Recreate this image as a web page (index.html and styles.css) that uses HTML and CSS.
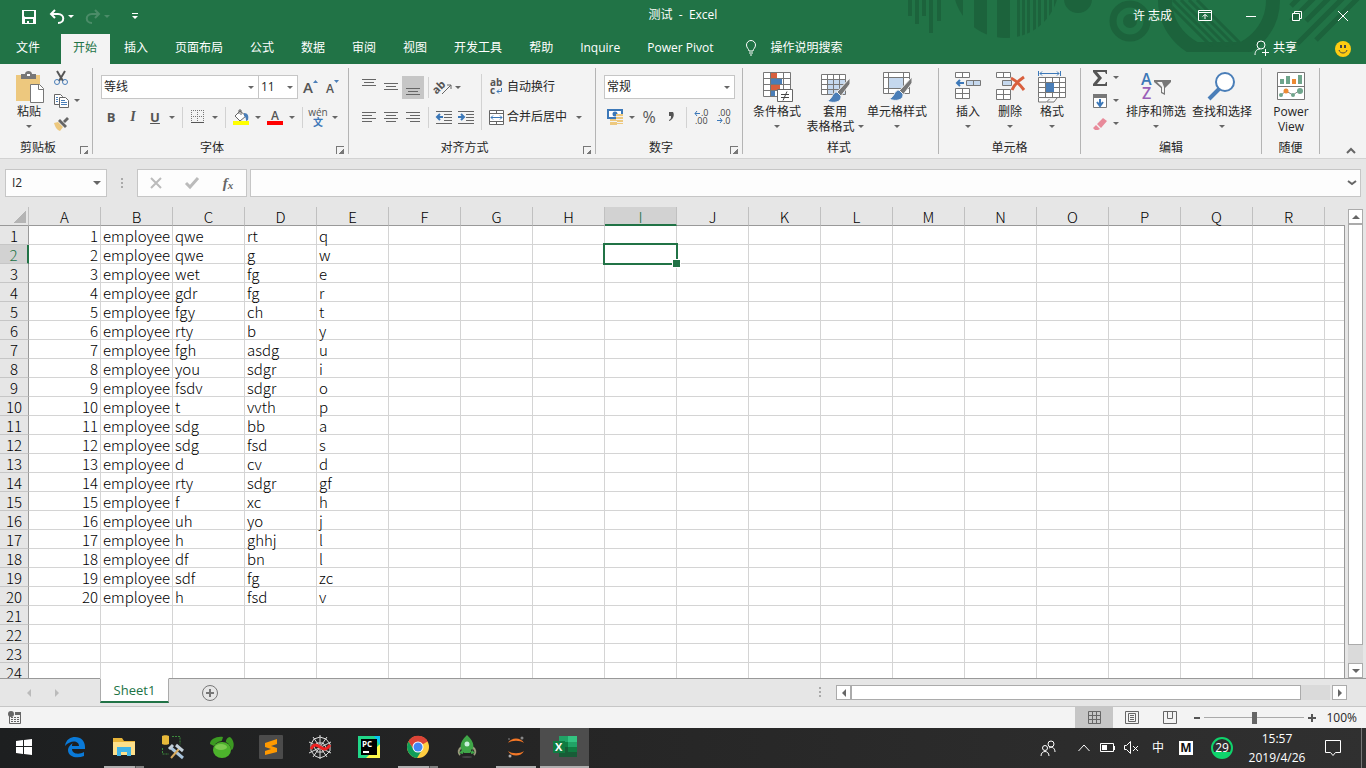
FILE: index.html
```html
<!DOCTYPE html>
<html lang="zh-CN">
<head>
    <meta charset="UTF-8">
    <meta name="viewport" content="width=device-width, initial-scale=1.0">
    <title>测试 - Excel</title>
    <link rel="stylesheet" href="styles.css">
</head>
<body>

<!-- 标题栏和选项卡 -->
<header class="header">
    <svg class="pattern" width="466" height="52" viewBox="900 0 466 52">
        <defs>
            <clipPath id="disc"><circle cx="1006" cy="-15" r="53"/></clipPath>
            <clipPath id="hole"><circle cx="1219" cy="0" r="47"/></clipPath>
        </defs>
        <path d="M908 0h4v16h-4zM915 0h4v24h-4zM922 0h4v16h-4zM929 0h4v33h-4zM937 0h4v21h-4z"/>
        <path clip-path="url(#disc)" d="M950 0h13v40h-13zM974 0h13v40h-13zM997 0h13v40h-13zM1017 0h3v40h-3zM1022 0h3v40h-3zM1027 0h3v40h-3zM1033 0h3v40h-3zM1038 0h3v40h-3zM1044 0h3v40h-3zM1049 0h3v40h-3zM1054 0h3v40h-3z"/>
        <circle cx="1078" cy="-1" r="14"/>
        <circle cx="1130" cy="21" r="7"/>
        <circle class="line" cx="1130" cy="21" r="17" stroke-width="7"/>
        <circle class="line" cx="1219" cy="0" r="54" stroke-width="14"/>
        <path d="M1176 42h80l-8 10h-60z" clip-path="url(#none)"/>
        <path class="line" clip-path="url(#hole)" stroke-width="3" d="M1165 0l50 50M1173 0l50 50M1181 0l50 50M1189 0l50 50M1197 0l50 50"/>
        <path class="line" stroke-width="5" d="M1291 6l10-10M1291 21l26-26M1306 21l26-26M1297 44l48-48M1316 40l42-42"/>
    </svg>
    <div class="titlebar">
        <div class="quick">
            <button aria-label="保存"><svg width="16" height="16"><path fill="#fff" fill-rule="evenodd" d="M1 1h14v14H1zM3 2v5l1 1h9V2zM4 10v4h2v-2h2v2h4v-4z"/></svg></button>
            <button class="undo" aria-label="撤消"><svg width="24" height="16"><path fill="none" stroke="#fff" stroke-width="2" d="M6 1L2 5l4 4M2 5h7c7 0 7 9 0 9"/><path fill="#fff" d="M19 6h6l-3 3z"/></svg></button>
            <button class="undo" aria-label="恢复"><svg width="24" height="16"><path fill="none" stroke="#4b8c68" stroke-width="2" d="M10 1l4 4-4 4M14 5H7c-7 0-7 9 0 9"/><path fill="#4b8c68" d="M19 6h6l-3 3z"/></svg></button>
            <button aria-label="自定义快速访问工具栏"><svg width="8" height="8"><path fill="#fff" d="M1 0h6v1H1zM1 3h6L4 6z"/></svg></button>
        </div>
        <div class="doc-title">测试&nbsp; -&nbsp; Excel</div>
        <div class="window">
            <span class="user">许 志成</span>
            <button aria-label="功能区显示选项"><svg width="14" height="12"><path class="w" d="M.5.5h13v10H.5zM.5 2.500h13M7 9V4.500M4.500 6.500L7 4.500l2.500 2"/></svg></button>
            <button aria-label="最小化"><svg width="12" height="12"><path class="w" d="M1 6.500h10"/></svg></button>
            <button aria-label="还原"><svg width="12" height="12"><path class="w" d="M1.500 3.500h7v7h-7zM3.500 3.500v-2h7v7h-2"/></svg></button>
            <button aria-label="关闭"><svg width="12" height="12"><path class="w" d="M1 1l10 10M11 1L1 11"/></svg></button>
        </div>
    </div>
    <nav class="tabs">
        <button class="file">文件</button>
        <button class="active">开始</button>
        <button>插入</button>
        <button>页面布局</button>
        <button>公式</button>
        <button>数据</button>
        <button>审阅</button>
        <button>视图</button>
        <button>开发工具</button>
        <button>帮助</button>
        <button>Inquire</button>
        <button>Power Pivot</button>
        <button class="tell"><svg width="12" height="16"><path class="w" d="M4 11c0-2-2.500-3-2.500-6a4.500 4.500 0 0 1 9 0c0 3-2.500 4-2.500 6zM4 13h4M5 15h2"/></svg>操作说明搜索</button>
        <button class="share"><svg width="16" height="16"><circle class="w" cx="7" cy="5" r="4"/><path class="w" d="M1 15c0-4 2-6 5-6M8 12.500h7M11.500 9v7"/></svg>共享</button>
        <button class="smile" aria-label="反馈"><svg width="16" height="16"><circle cx="8" cy="8" r="8" fill="#fc1"/><path fill="#444" d="M5 4h2v3H5zM9 4h2v3H9z"/><path fill="none" stroke="#444" d="M4 9c1 4 7 4 8 0"/></svg></button>
    </nav>
</header>

<!-- 功能区 -->
<section class="ribbon">
    <div class="group g-clip">
        <div class="body">
            <button class="big"><svg width="30" height="32"><path fill="#edc87e" d="M2 4h24v26H2z"/><path fill="#777" d="M7 3h4c0-4 7-4 7 0h4v5H7z"/><path fill="#fff" d="M13 3h3v2h-3z"/><path fill="#fff" stroke="#777" d="M16.500 13.500h9l4 4v14h-13z"/><path fill="none" stroke="#777" d="M24.500 13.500v5h5"/></svg><span>粘贴</span><i class="arrow"></i></button>
            <div class="minis">
                <button aria-label="剪切"><svg width="16" height="16"><path fill="none" stroke="#555" stroke-width="2" d="M4 1l6 10M12 1L6 11"/><circle cx="4" cy="12" r="2.500" fill="none" stroke="#4a7eb8"/><circle cx="12" cy="12" r="2.500" fill="none" stroke="#4a7eb8"/></svg></button>
                <button aria-label="复制"><svg width="16" height="16"><path fill="#fff" stroke="#666" d="M1.500 1.500h6l2 2v8h-8z"/><path fill="#fff" stroke="#666" d="M6.500 4.500h6l3 3v7h-9z"/><path stroke="#4a7eb8" d="M3 4.500h2M3 6.500h2M3 8.500h2M8 7.500h4M8 9.500h6M8 11.500h6"/></svg><i class="arrow"></i></button>
                <button aria-label="格式刷"><svg width="16" height="16"><path fill="#edc87e" d="M1 7l4-1 5 5-3 4C4 14 2 11 1 7z"/><path fill="#666" d="M5 5l2-2 7 7-2 2zM10 5l4-4 2 2-4 4z"/></svg></button>
            </div>
        </div>
        <div class="caption launchable"><span>剪贴板</span><button class="launch" aria-label="剪贴板选项"></button></div>
    </div>

    <div class="group g-font">
        <div class="rows">
            <div class="row">
                <span class="combo font-name"><select aria-label="字体"><option>等线</option></select></span>
                <span class="combo font-size"><select aria-label="字号"><option>11</option></select></span>
                <button class="tool" aria-label="增大字号"><svg class="grow" width="16" height="16"><text x="0" y="14">A</text><path fill="#4a7eb8" d="M10 4h5l-2.500-3z"/></svg></button>
                <button class="tool" aria-label="减小字号"><svg class="shrink" width="16" height="16"><text x="1" y="14">A</text><path fill="#4a7eb8" d="M9 1h5l-2.500 3z"/></svg></button>
            </div>
            <div class="row">
                <button class="tool b">B</button>
                <button class="tool it">I</button>
                <button class="tool un">U</button>
                <button class="drop" aria-label="下划线选项"><i class="arrow"></i></button>
                <i class="sep"></i>
                <button class="tool" aria-label="边框"><svg width="14" height="14"><path fill="none" stroke="#777" stroke-dasharray="1 1" d="M0 .5h13M.5 0v13M12.500 0v13M6.500 0v13M0 6.500h13"/><path stroke="#555" d="M0 12.500h13"/></svg></button>
                <button class="drop" aria-label="边框选项"><i class="arrow"></i></button>
                <i class="sep"></i>
                <button class="tool" aria-label="填充颜色"><svg width="16" height="16"><path fill="#fff" stroke="#666" d="M2 7l5-5 6 5-6 5z"/><path fill="none" stroke="#666" d="M6 5V1h2v5"/><path fill="#4a7eb8" d="M11 4c4 0 5 3 4 7l-2 1c0-2 0-4-2-5z"/><path fill="#ff0" d="M0 12h16v4H0z"/></svg></button>
                <button class="drop" aria-label="填充选项"><i class="arrow"></i></button>
                <button class="tool" aria-label="字体颜色"><svg class="shrink" width="16" height="16"><text x="4" y="11">A</text><path fill="red" d="M0 12h16v4H0z"/></svg></button>
                <button class="drop" aria-label="颜色选项"><i class="arrow"></i></button>
                <i class="sep"></i>
                <button class="tool pinyin"><span>wén</span><b>文</b></button>
                <button class="drop" aria-label="拼音选项"><i class="arrow"></i></button>
            </div>
        </div>
        <div class="caption launchable"><span>字体</span><button class="launch" aria-label="字体选项"></button></div>
    </div>

    <div class="group g-align">
        <div class="body">
            <div class="rows">
                <div class="row">
                    <button class="tool" aria-label="顶端对齐"><svg width="14" height="16"><path class="g" d="M0 .5h14M2 3.500h10M0 6.500h14"/></svg></button>
                    <button class="tool" aria-label="垂直居中"><svg width="14" height="16"><path class="g" d="M0 4.500h14M2 7.500h10M0 10.500h14"/></svg></button>
                    <button class="tool on" aria-label="底端对齐"><svg width="14" height="16"><path class="g" d="M0 9.500h14M2 12.500h10M0 15.500h14"/></svg></button>
                    <i class="sep"></i>
                    <button class="tool ab" aria-label="方向"><svg width="18" height="18"><text x="-3" y="12" transform="rotate(-45 5 9)">ab</text><path class="g" d="M7 16L16 7M12 7h4v4"/></svg></button>
                    <button class="drop near" aria-label="方向选项"><i class="arrow"></i></button>
                </div>
                <div class="row">
                    <button class="tool" aria-label="左对齐"><svg width="14" height="14"><path class="g" d="M0 2.500h14M0 5.500h10M0 8.500h14M0 11.500h10"/></svg></button>
                    <button class="tool" aria-label="居中"><svg width="14" height="14"><path class="g" d="M0 2.500h14M2 5.500h10M0 8.500h14M2 11.500h10"/></svg></button>
                    <button class="tool" aria-label="右对齐"><svg width="14" height="14"><path class="g" d="M0 2.500h14M4 5.500h10M0 8.500h14M4 11.500h10"/></svg></button>
                    <i class="sep"></i>
                    <button class="tool" aria-label="减少缩进"><svg width="16" height="14"><path class="g" d="M0 1.500h16M8 4.500h8M8 7.500h8M8 10.500h8M0 13.500h16"/><path fill="none" stroke="#3c78b8" stroke-width="2" d="M7 7H2M4 4L1 7l3 3"/></svg></button>
                    <button class="tool" aria-label="增加缩进"><svg width="16" height="14"><path class="g" d="M0 1.500h16M8 4.500h8M8 7.500h8M8 10.500h8M0 13.500h16"/><path fill="none" stroke="#3c78b8" stroke-width="2" d="M0 7h5M3 4l3 3-3 3"/></svg></button>
                </div>
            </div>
            <i class="sep tall"></i>
            <div class="rows">
                <div class="row"><button class="text"><svg class="abc" width="16" height="18"><text x="1" y="8">ab</text><text x="1" y="16">c</text><path fill="none" stroke="#3c78b8" d="M12.500 10v3.500H8M10 11.500l-2 2 2 2"/></svg>自动换行</button></div>
                <div class="row"><button class="text"><svg width="16" height="16"><path fill="#fff" stroke="#666" d="M.5 1.500h14v14H.5zM.5 4.500h14M.5 12.500h14M7.500 1.500v3M7.500 12.500v3"/><path fill="none" stroke="#3c78b8" d="M2 8.500h11M4 6.500l-2 2 2 2M11 6.500l2 2-2 2"/></svg>合并后居中</button><button class="drop wide" aria-label="合并选项"><i class="arrow"></i></button></div>
            </div>
        </div>
        <div class="caption launchable"><span>对齐方式</span><button class="launch" aria-label="对齐选项"></button></div>
    </div>

    <div class="group g-num">
        <div class="rows">
            <div class="row"><span class="combo num-format"><select aria-label="数字格式"><option>常规</option></select></span></div>
            <div class="row">
                <button class="tool" aria-label="会计数字格式"><svg width="18" height="18"><path fill="#fff" stroke="#3c78b8" stroke-width="2" d="M2 2h14v8H2z"/><circle cx="9" cy="6" r="2.500" fill="#3c78b8"/><path fill="#edc87e" d="M10 6h7v10h-7zM4 11h7v6H4z"/><path stroke="#f3f3f3" d="M10 8.500h7M10 11.500h7M4 13.500h7M11 14.500h6"/></svg></button>
                <button class="drop" aria-label="货币选项"><i class="arrow"></i></button>
                <button class="tool pct">%</button>
                <button class="tool comma" aria-label="千位分隔样式"><svg width="8" height="12"><path fill="#555" d="M2 1h4c2 3 0 8-4 9v-1c2-1 2-2 2-4H2z"/></svg></button>
                <i class="sep"></i>
                <button class="tool" aria-label="增加小数位数"><svg class="dec" width="16" height="16"><text x="7" y="7">.0</text><text x="1" y="15">.00</text><path fill="none" stroke="#3c78b8" d="M6 4.500H1M3 2L1 4.500 3 7"/></svg></button>
                <button class="tool" aria-label="减少小数位数"><svg class="dec" width="16" height="16"><text x="2" y="7">.00</text><text x="7" y="15">.0</text><path fill="none" stroke="#3c78b8" d="M1 11.500h5M4 9l2 2.500L4 14"/></svg></button>
            </div>
        </div>
        <div class="caption launchable"><span>数字</span><button class="launch" aria-label="数字选项"></button></div>
    </div>

    <div class="group g-style">
        <div class="body">
            <button class="big w58"><svg width="32" height="32"><path fill="#fff" stroke="#777" d="M2.500 1.500h27v24h-27zM2.500 7.500h27M2.500 13.500h27M2.500 19.500h27M9.500 1.500v24M22.500 1.500v24"/><path fill="#d95f3d" d="M10 2h6v5h-6zM10 14h9v5h-9z"/><path fill="#4a7eb8" d="M10 8h11v5H10zM10 20h4v5h-4z"/><path fill="#fff" stroke="#666" d="M16.500 18.500h15v12h-15z"/><path stroke="#444" d="M20 23.500h8M20 26.500h8M26 20.500l-4 9"/></svg><span>条件格式</span><i class="arrow"></i></button>
            <button class="big w58"><svg width="32" height="32"><path fill="#fff" d="M2 3h24v21H2z"/><path fill="#c5d8ee" d="M8 9h18v15H8z"/><path fill="none" stroke="#777" d="M2.500 3.500h24v20h-24zM2.500 8.500h24M2.500 13.500h24M2.500 18.500h24M8.500 3.500v20M14.500 3.500v20M20.500 3.500v20"/><path fill="#777" stroke="#f3f3f3" d="M31 7L18 21l4 4 9-12z"/><path fill="#4a7eb8" stroke="#f3f3f3" d="M18 21c-5 0-4 7-10 9 7 3 15 1 14-5z"/></svg><span>套用</span><span class="second">表格格式<i class="arrow"></i></span></button>
            <button class="big w66"><svg width="32" height="32"><path fill="#fff" stroke="#777" d="M2.500 1.500h26v21h-26zM2.500 6.500h26M2.500 17.500h26M7.500 1.500v21M22.500 1.500v21"/><path fill="#c5d8ee" d="M8 7h14v10H8z"/><path fill="#777" stroke="#f3f3f3" d="M31 6L18 20l4 4 9-12z"/><path fill="#4a7eb8" stroke="#f3f3f3" d="M18 19c-5 0-4 7-10 9 7 3 15 1 14-5z"/></svg><span>单元格样式</span><i class="arrow"></i></button>
        </div>
        <div class="caption"><span>样式</span></div>
    </div>

    <div class="group g-cell">
        <div class="body">
            <button class="big w42"><svg width="30" height="32"><path fill="#fff" stroke="#777" d="M2.500 1.500h14v5h-14zM9.500 1.500v5M2.500 17.500h14v10h-14zM9.500 17.500v10M2.500 22.500h14"/><path fill="#c5d8ee" stroke="#777" d="M13.500 9.500h14v5h-14zM20.500 9.500v5"/><path fill="none" stroke="#3c78b8" stroke-width="2" d="M11 12H4M7 9l-3 3 3 3"/></svg><span>插入</span><i class="arrow"></i></button>
            <button class="big w42"><svg width="30" height="32"><path fill="#fff" stroke="#777" d="M1.500 1.500h14v5h-14zM8.500 1.500v5M1.500 18.500h14v10h-14zM8.500 18.500v10M1.500 23.500h14"/><path fill="#c5d8ee" stroke="#777" d="M7.500 9.500h9v5h-9z"/><path fill="none" stroke="#d95f3d" stroke-width="3" d="M16 7c4 2 10 8 13 12M29 6c-6 4-10 8-12 13"/></svg><span>删除</span><i class="arrow"></i></button>
            <button class="big w42"><svg width="30" height="32"><path fill="#fff" stroke="#777" d="M1.500 6.500h27v20h-27zM1.500 11.500h27M1.500 21.500h27M8.500 6.500v20M15.500 6.500v20M22.500 6.500v20M1.500 16.500h27M1.500 27v4h8l3-3M10 31h7l3-4"/><path fill="#4a7eb8" d="M9 12h8v9H9z"/><path fill="none" stroke="#3c78b8" d="M1.500 0v5M23.500 0v5M3 2.500h19M5 .5l-2 2 2 2M20 .5l2 2-2 2"/></svg><span>格式</span><i class="arrow"></i></button>
        </div>
        <div class="caption"><span>单元格</span></div>
    </div>

    <div class="group g-edit">
        <div class="body">
            <div class="minis">
                <button aria-label="自动求和"><svg width="16" height="16"><path fill="#555" d="M1 0h14v4h-1l-1-2H5l5 6-5 6h8l1-2h1v4H1v-2l5-6-5-6z"/></svg><i class="arrow"></i></button>
                <button aria-label="填充"><svg width="16" height="16"><path fill="#fff" stroke="#777" d="M1.500 1.500h13v13h-13z"/><path fill="#777" d="M1 1h14v4H1z"/><path fill="none" stroke="#3c78b8" stroke-width="2" d="M8 6v7M5 9l3 4 3-4"/></svg><i class="arrow"></i></button>
                <button aria-label="清除"><svg width="16" height="16"><path fill="#e88a9a" d="M5 8l6-6 4 3-6 7zM4 9l4 4-2 1H3l-2-2z"/></svg><i class="arrow"></i></button>
            </div>
            <button class="big w66"><svg class="sort" width="32" height="32"><text fill="#3c78b8" x="1" y="14">A</text><text fill="#9a5fb8" x="2" y="28">Z</text><path fill="#777" d="M14 9h17v2l-6 6v7l-4-2v-5l-7-6z"/><path fill="#f3f3f3" d="M17 11h5l2 5v6l-2-1v-5z"/></svg><span>排序和筛选</span><i class="arrow"></i></button>
            <button class="big w66"><svg width="32" height="32"><circle cx="19" cy="11" r="9" fill="#fff" stroke="#4a7eb8" stroke-width="2"/><path stroke="#4a7eb8" stroke-width="4" d="M13 18L3 28"/></svg><span>查找和选择</span><i class="arrow"></i></button>
        </div>
        <div class="caption"><span>编辑</span></div>
    </div>

    <div class="group g-view">
        <div class="body">
            <button class="big"><svg width="28" height="32"><path fill="#fff" stroke="#777" d="M.5 1.500h27v27H.5zM.5 15.500h27"/><path fill="#6fa58c" d="M3 8h4v5H3zM9 5h4v8H9zM21 4h4v9h-4z"/><path fill="#ec8a34" d="M15 8h4v5h-4z"/><path fill="none" stroke="#888" d="M4 24l5-4 7 4 7-5"/><circle cx="9" cy="20" r="2.500" fill="#ec8a34"/><circle cx="16" cy="24" r="2" fill="#6fa58c"/><circle cx="4" cy="24" r="2" fill="#6fa58c"/><circle cx="23" cy="20" r="3" fill="#6fa58c"/></svg><span>Power</span><span>View</span></button>
        </div>
        <div class="caption"><span>随便</span></div>
    </div>
    <button class="collapse" aria-label="折叠功能区"><svg width="10" height="6"><path fill="none" stroke="#666" stroke-width="2" d="M1 5l4-4 4 4"/></svg></button>
</section>

<!-- 编辑栏 -->
<section class="formula">
    <div class="namebox"><input aria-label="名称框" value="I2"><i class="arrow"></i></div>
    <i class="dots"></i>
    <div class="fx">
        <button aria-label="取消"><svg width="12" height="12"><path stroke="#bbb" stroke-width="2" d="M1 1l10 10M11 1L1 11"/></svg></button>
        <button aria-label="输入"><svg width="14" height="12"><path fill="none" stroke="#bbb" stroke-width="3" d="M1 6l4 4 8-9"/></svg></button>
        <button class="fn">f<sub>x</sub></button>
    </div>
    <div class="content"><input aria-label="编辑栏"><svg width="8" height="6"><path fill="none" stroke="#666" stroke-width="2" d="M0 1l4 3 4-3"/></svg></div>
</section>

<!-- 工作表 -->
<main class="sheet">
    <div class="grid">
        <table>
            <thead><tr id="letters"></tr></thead>
            <tbody id="cells"></tbody>
        </table>
    </div>
    <div class="vscroll">
        <button class="up" aria-label="向上"></button>
        <div class="track"><div class="thumb"></div></div>
        <button class="down" aria-label="向下"></button>
    </div>
</main>

<div class="sheetbar">
    <div class="nav"><i class="left"></i><i class="right"></i></div>
    <button class="sheet-tab">Sheet1</button>
    <button class="add" aria-label="新工作表"><svg width="16" height="16"><circle cx="8" cy="8" r="7.500" fill="none" stroke="#777"/><path stroke="#777" stroke-width="2" d="M4 8h8M8 4v8"/></svg></button>
    <i class="dots"></i>
    <div class="hscroll">
        <button class="left" aria-label="向左"></button>
        <div class="track"><div class="thumb"></div></div>
        <button class="right" aria-label="向右"></button>
    </div>
</div>

<footer class="status">
    <button class="macro" aria-label="录制宏"><svg width="14" height="14"><path fill="none" stroke="#666" d="M1.500 5v7.500h11v-11H7"/><path fill="#666" d="M7 1h6v3H7z"/><circle cx="3" cy="3" r="3" fill="#666"/><path stroke="#666" stroke-dasharray="2 1" d="M3 6.500h9M3 8.500h9M3 10.500h9"/></svg></button>
    <button class="view on" aria-label="普通"><svg width="13" height="13"><path class="g" d="M.5.5h12v12H.5zM4.500 0v13M8.500 0v13M0 4.500h13M0 8.500h13"/></svg></button>
    <button class="view" aria-label="页面布局视图"><svg width="14" height="13"><path class="g" d="M.5.5h13v12H.5zM3.500 2.500h7v8h-7zM5 4.500h4M5 6.500h4M5 8.500h4"/></svg></button>
    <button class="view" aria-label="分页预览"><svg width="14" height="13"><path class="g" d="M.5.5h13v12H.5zM4.500 0v7.500h5V0"/></svg></button>
    <button class="zoom" aria-label="缩小"><svg width="8" height="8"><path stroke="#555" stroke-width="2" d="M1 4h6"/></svg></button>
    <input type="range" aria-label="缩放" min="0" max="200" value="100">
    <button class="zoom" aria-label="放大"><svg width="8" height="8"><path stroke="#555" stroke-width="2" d="M0 4h8M4 0v8"/></svg></button>
    <span class="percent">100%</span>
</footer>

<!-- 任务栏 -->
<div class="taskbar">
    <button class="start" aria-label="开始菜单"><svg width="16" height="16"><path fill="#fff" d="M0 2l7-1v6H0zM8 1l8-1v7H8zM0 8h7v7l-7-1zM8 8h8v8l-8-1z"/></svg></button>
    <button aria-label="Edge"><svg width="22" height="22"><path fill="#0a7ad8" d="M1 10C2 3 7 1 11 1c6 0 10 4 10 10v2H8c0 5 7 6 12 3v4C13 23 4 21 4 14c0-3 2-5 5-7-1 1-1 2-1 3h7c0-6-9-6-14 0z"/></svg></button>
    <button class="run more" aria-label="文件资源管理器"><svg width="22" height="20"><path fill="#e8b53a" d="M0 1h9l2 3h11v14H0z"/><path fill="#fde08a" d="M0 5h22v13H0z"/><path fill="#3fb4e8" d="M4 10h14v9h-4v-4H8v4H4z"/></svg></button>
    <button aria-label="数据工具"><svg width="24" height="24"><path fill="#e8b93a" d="M1 1c1-1 6-1 7 0v8c-1 1-6 1-7 0z"/><path fill="none" stroke="#3c8a3c" stroke-dasharray="2 1" d="M11 1.500h8v8M1.500 13v6H8"/><path stroke="#a9c5dd" stroke-width="3" d="M9 12l13 11"/><path stroke="#d8a95c" stroke-width="2" d="M10 23l8-9"/><path fill="none" stroke="#c4d0da" stroke-width="3" d="M15 10l7 6M8 14l4-4"/></svg></button>
    <button aria-label="Xshell"><svg width="24" height="22"><path fill="#3c9a22" d="M0 8C0 3 7 0 13 1c-1 5-4 8-9 9zM16 9c-1-4 1-8 4-8 4 3 5 9 2 13-2-1-4-3-6-5z"/><circle cx="12" cy="14" r="9" fill="#222"/><ellipse cx="12" cy="14" rx="9" ry="8" fill="#4db32c"/><ellipse cx="11" cy="11" rx="6" ry="3" fill="#7ccb50"/></svg></button>
    <button aria-label="Sublime Text"><svg width="24" height="24"><rect width="24" height="24" rx="1" fill="#4b4b4b"/><path fill="#f90" d="M6 8l12-4v5l-6 2 6 2v4L6 20v-4l6-2-6-2z"/></svg></button>
    <button aria-label="Spyder"><svg width="24" height="24"><path fill="none" stroke="#ddd" stroke-width="1" d="M12 0v24M1 7l22 11M1 18L23 7M5 2l14 20M19 2L5 22M6 4l6-2 6 2 4 5v7l-5 5-5 2-5-2-4-5V9zM9 8h6l3 4-3 5H9l-3-5z"/><path fill="none" stroke="#e22" stroke-width="3" d="M3 14c3-6 6-4 9-2s6 4 10-2"/></svg></button>
    <button aria-label="PyCharm"><svg width="22" height="22"><path fill="#21d789" d="M0 0h22v22H0z"/><path fill="#fcf84a" d="M22 8v14H8z"/><path fill="#07c3f2" d="M16 0h6v9z"/><path fill="#000" d="M3 3h16v16H3z"/><text class="logo" x="4" y="11">PC</text><path fill="#fff" d="M5 15h6v2H5z"/></svg></button>
    <button class="run more" aria-label="Chrome"><svg width="22" height="22"><circle cx="11" cy="11" r="11" fill="#ffcd40"/><path fill="#db4437" d="M11 11L1.500 5.500a11 11 0 0 1 19 0z"/><path fill="#db4437" d="M11 6h10a11 11 0 0 0-19.500-.5L7 14z"/><path fill="#0f9d58" d="M1.500 5.500A11 11 0 0 0 10 22l5-8-8 0z"/><circle cx="11" cy="11" r="5.500" fill="#fff"/><circle cx="11" cy="11" r="4.500" fill="#4285f4"/></svg></button>
    <button aria-label="火箭"><svg width="20" height="24"><path fill="none" stroke="#9a9a7c" stroke-width="2" d="M5 12c-4 2-4 6-2 8M15 12c4 2 4 6 2 8"/><path fill="#3fa648" d="M10 0c9 8 7 14 3 18H7C3 14 1 8 10 0zM2 18l4-4v5zM18 18l-4-4v5z"/><circle cx="10" cy="9" r="2.500" fill="#c8f0dc"/><ellipse cx="10" cy="22" rx="5" ry="1" fill="#444"/></svg></button>
    <button class="run" aria-label="Jupyter"><svg width="18" height="22"><path fill="#f37726" d="M1 7c3-6 13-6 16 0-4-3-12-3-16 0zM1 15c4 3 12 3 16 0-3 6-13 6-16 0z"/><circle cx="15" cy="2" r="1.500" fill="#888"/><circle cx="3" cy="20" r="1.500" fill="#aaa"/><circle cx="2" cy="3" r="1" fill="#666"/></svg></button>
    <button class="run current" aria-label="Excel"><svg width="24" height="22"><path fill="#21a366" d="M6 0h18v6H6z"/><path fill="#33c481" d="M15 0h9v6h-9z"/><path fill="#107c41" d="M6 6h18v5H6z"/><path fill="#21a366" d="M15 6h9v5h-9z"/><path fill="#185c37" d="M6 11h18v10H6z"/><path fill="#107c41" d="M15 11h9v5h-9zM0 5h12v12H0z"/><text class="logo x" x="2" y="15">X</text></svg></button>

    <div class="tray">
        <button class="people" aria-label="人脉"><svg width="16" height="18"><circle class="w" cx="11" cy="5" r="3"/><circle class="w" cx="5" cy="9" r="2.500"/><path class="w" d="M1 17c0-6 8-6 8 0M9 9c4-2 6 1 6 4"/></svg></button>
        <button aria-label="显示隐藏的图标"><svg width="12" height="8"><path class="w" d="M.5 7L6 1l5.500 6"/></svg></button>
        <button aria-label="电池"><svg width="16" height="10"><path class="w" d="M.5.5h13v8H.5zM14.500 3v4"/><path fill="#fff" d="M2 2h5v5H2z"/></svg></button>
        <button aria-label="音量"><svg width="16" height="14"><path class="w" d="M.5 4.500h2l4-4v12l-4-4h-2zM9 5l5 5M14 5l-5 5"/></svg></button>
        <button class="ime">中</button>
        <button class="mode"><span>M</span></button>
        <button class="badge"><span>29</span></button>
        <div class="clock"><span>15:57</span><span>2019/4/26</span></div>
        <button class="notice" aria-label="通知"><svg width="16" height="18"><path class="w" d="M.5 1.500h15v12h-5l-2.500 3-2.500-3h-5z"/></svg></button>
        <i class="desktop"></i>
    </div>
</div>

<script>
    const rows = [
        ['qwe', 'rt', 'q'], ['qwe', 'g', 'w'], ['wet', 'fg', 'e'], ['gdr', 'fg', 'r'],
        ['fgy', 'ch', 't'], ['rty', 'b', 'y'], ['fgh', 'asdg', 'u'], ['you', 'sdgr', 'i'],
        ['fsdv', 'sdgr', 'o'], ['t', 'vvth', 'p'], ['sdg', 'bb', 'a'], ['sdg', 'fsd', 's'],
        ['d', 'cv', 'd'], ['rty', 'sdgr', 'gf'], ['f', 'xc', 'h'], ['uh', 'yo', 'j'],
        ['h', 'ghhj', 'l'], ['df', 'bn', 'l'], ['sdf', 'fg', 'zc'], ['h', 'fsd', 'v']
    ];
    const letters = 'ABCDEFGHIJKLMNOPQRS'.split('');
    const active = { col: 8, row: 2 };

    // 列标
    const head = document.getElementById('letters');
    head.innerHTML = '<th class="corner"></th>';
    letters.forEach((letter, i) => {
        const th = document.createElement('th');
        th.textContent = letter;
        if (i === active.col) th.className = 'sel';
        head.appendChild(th);
    });

    // 单元格
    const body = document.getElementById('cells');
    for (let r = 1; r <= 24; r++) {
        const tr = body.insertRow();
        const th = document.createElement('th');
        th.textContent = r;
        if (r === active.row) th.className = 'sel';
        tr.appendChild(th);
        const data = rows[r - 1] ? [r, 'employee', ...rows[r - 1]] : [];
        letters.forEach((letter, i) => {
            const td = tr.insertCell();
            td.textContent = data[i] === undefined ? '' : data[i];
            if (i === 0) td.className = 'num';
            if (i === active.col && r === active.row) td.className = 'cursor';
        });
    }
</script>

</body>
</html>
```
FILE: styles.css
```css
* {
    margin: 0;
    padding: 0;
    box-sizing: border-box;
}

body {
    font-family: 'Open Sans', 'Noto Sans CJK SC', sans-serif;
    font-size: 12px;
    line-height: 16px;
    color: #262626;
    height: 100vh;
    display: flex;
    flex-direction: column;
    overflow: hidden;
    background: #e6e6e6;
}

button {
    font: inherit;
    color: inherit;
    background: none;
    border: none;
    display: flex;
    align-items: center;
    justify-content: center;
    flex-shrink: 0;
    white-space: nowrap;
}

input, select {
    font: inherit;
    color: inherit;
    border: none;
    background: none;
    outline: none;
    min-width: 0;
}

svg {
    display: block;
    flex-shrink: 0;
    overflow: visible;
}

.w {
    fill: none;
    stroke: #fff;
}

.g {
    fill: none;
    stroke: #666;
}

.arrow {
    display: block;
    border: 3px solid transparent;
    border-top-color: #666;
    border-bottom-width: 0;
}

/* 标题栏 */
.header {
    position: relative;
    background: #217346;
    color: #fff;
    flex-shrink: 0;
}

.pattern {
    position: absolute;
    top: 0;
    right: 0;
    overflow: hidden;
    fill: #1c633c;
}

.pattern .line {
    fill: none;
    stroke: #1c633c;
}

.titlebar {
    position: relative;
    height: 34px;
    display: grid;
    grid-template-columns: 1fr auto 1fr;
    align-items: center;
}

.quick {
    display: flex;
    align-items: center;
    padding-left: 21px;
    gap: 12px;
}

.quick .undo {
    width: 24px;
}

.quick button:last-child {
    margin-left: 10px;
}

.doc-title {
    margin-top: -4px;
}

.window {
    display: flex;
    justify-content: flex-end;
    align-items: center;
    margin-top: -3px;
}

.window button {
    width: 46px;
    height: 30px;
}

.user {
    margin-right: 10px;
}

.tabs {
    position: relative;
    display: flex;
    height: 30px;
}

.tabs button {
    padding: 0 13px 2px 12px;
    margin-right: 2px;
}

.tabs .file {
    width: 61px;
    padding-left: 8px;
    margin: 0;
}

.tabs .active {
    background: #f3f3f3;
    color: #217346;
}

.tabs .tell {
    gap: 13px;
    padding-left: 17px;
}

.tabs .share {
    margin-left: auto;
    gap: 3px;
}

.tabs .smile {
    padding: 0 15px 0 23px;
    margin: 0;
}

/* 功能区 */
.ribbon {
    display: flex;
    height: 95px;
    flex-shrink: 0;
    padding-top: 4px;
    background: #f3f3f3;
    border-bottom: 1px solid #d2d2d2;
}

.group {
    height: 86px;
    border-right: 1px solid #b4b4b4;
    display: flex;
    flex-direction: column;
    flex-shrink: 0;
}

.body {
    display: flex;
}

.g-clip { width: 93px; padding-left: 8px; }
.g-font { width: 256px; padding-left: 7px; }
.g-align { width: 247px; padding-left: 9px; }
.g-num { width: 147px; padding-left: 8px; }
.g-style { width: 196px; padding-left: 5px; }
.g-cell { width: 142px; padding-left: 8px; }
.g-edit { width: 181px; padding-left: 8px; }
.g-view { width: 58px; padding-left: 8px; }

.group > .body, .group > .rows {
    height: 71px;
}

.caption {
    display: flex;
    height: 16px;
    padding-top: 4px;
    justify-content: center;
    align-items: center;
    position: relative;
    margin-right: 8px;
}

.launchable {
    padding-right: 16px;
}

.launch {
    position: absolute;
    right: -4px;
    bottom: 0;
    width: 8px;
    height: 8px;
    border-top: 1px solid #777;
    border-left: 1px solid #777;
}

.launch::after {
    content: '';
    width: 5px;
    height: 5px;
    margin: 2px 0 0 2px;
    background: linear-gradient(135deg, transparent 50%, #777 50%);
}

.big {
    flex-direction: column;
    justify-content: flex-start;
    width: 42px;
    padding-top: 3px;
    line-height: 15px;
}

.big span {
    margin-top: 1px;
}

.big > span + span {
    margin-top: 0;
}

.big > .arrow {
    margin-top: 6px;
}

.big .second {
    display: flex;
    align-items: center;
    gap: 3px;
}

.w42 { width: 42px; }
.w58 { width: 58px; }
.w66 { width: 66px; }

.minis {
    display: flex;
    flex-direction: column;
    width: 35px;
    padding-left: 3px;
    margin-top: -2px;
}

.g-edit .minis {
    width: 34px;
}

.minis button {
    height: 23px;
    gap: 5px;
    justify-content: flex-start;
}

.rows {
    display: flex;
    flex-direction: column;
    gap: 6px;
    padding-top: 7px;
}

.row {
    display: flex;
    align-items: center;
    height: 24px;
}

.combo {
    display: flex;
    align-items: center;
    height: 24px;
    background: #fff;
    border: 1px solid #c6c6c6;
    margin-right: -1px;
}

.combo select {
    appearance: none;
    flex: 1;
    padding-left: 2px;
}

.combo::after {
    content: '';
    border: 3px solid transparent;
    border-top-color: #666;
    border-bottom-width: 0;
    margin: 0 4px;
}

.font-name { width: 158px; margin-left: 1px; }
.font-size { width: 40px; margin-right: 2px; }
.num-format { width: 131px; }

.tool {
    width: 22px;
    height: 23px;
    color: #555;
}

.on {
    background: #c6c6c6;
}

.grow text, .shrink text {
    font-size: 15px;
    font-weight: 600;
    fill: #555;
}

.shrink text {
    font-size: 12px;
}

.b, .un {
    font-weight: bold;
    font-size: 13px;
}

.it {
    font: italic bold 14px 'Liberation Serif', serif;
}

.un {
    text-decoration: underline;
}

.drop {
    width: 12px;
    height: 23px;
}

.near { width: 6px; }
.wide { width: 24px; }

.sep {
    width: 1px;
    height: 21px;
    margin: 0 4px;
    background: #d2d2d2;
}

.sep.tall {
    height: 56px;
    margin: 6px 7px 0 4px;
}

.pinyin {
    flex-direction: column;
    line-height: 10px;
    font-size: 10px;
}

.pinyin b {
    color: #3c78b8;
}

.ab text, .abc text {
    font-size: 11px;
    font-weight: bold;
    fill: #555;
}

.abc text {
    font-size: 10px;
}

.dec text {
    font-size: 9px;
    fill: #444;
}

.sort text {
    font-size: 16px;
    font-weight: 600;
}

.pct {
    font-size: 16px;
}

.text {
    gap: 2px;
}

.collapse {
    margin: 80px 10px 0 auto;
    height: 6px;
}

/* 编辑栏 */
.formula {
    display: flex;
    align-items: center;
    height: 48px;
    flex-shrink: 0;
    padding: 0 5px;
}

.namebox, .fx, .content {
    display: flex;
    align-items: center;
    height: 28px;
    background: #fdfdfd;
    border: 1px solid #c6c6c6;
}

.namebox {
    width: 102px;
    padding: 0 5px 0 6px;
}

.namebox input, .content input {
    flex: 1;
}

.namebox .arrow {
    border-width: 4px 4px 0 4px;
}

.dots {
    width: 2px;
    height: 11px;
    margin: 0 14px;
    background: repeating-linear-gradient(#aaa 0 2px, transparent 2px 4px);
}

.fx {
    width: 110px;
    margin-right: 3px;
}

.fx button {
    width: 36px;
}

.fn {
    font: italic bold 15px 'Liberation Serif', serif;
    color: #666;
}

.fn sub {
    font-size: 11px;
    margin-top: 4px;
}

.content {
    flex: 1;
    padding: 0 4px;
}

/* 工作表 */
.sheet {
    display: flex;
    flex: 1;
    min-height: 0;
}

.grid {
    position: relative;
    flex: 1;
    min-width: 0;
    overflow: hidden;
}

.grid::after {
    content: '';
    position: absolute;
    top: 18px;
    right: 0;
    bottom: 0;
    width: 1px;
    background: #999;
}

table {
    table-layout: fixed;
    width: 1397px;
    border-collapse: separate;
    border-spacing: 0;
    font: 300 15px 'Noto Sans CJK SC', sans-serif;
    line-height: 16px;
    color: #000;
}

th {
    width: 72px;
    height: 19px;
    padding-top: 2px;
    font-weight: 300;
    background: #e6e6e6;
    border-right: 1px solid #c0c0c0;
    border-bottom: 1px solid #999;
}

th.corner {
    width: 29px;
    background: linear-gradient(135deg, #e6e6e6 50%, #b4b4b4 50%) 14px 4px / 12px 12px no-repeat #e6e6e6;
}

tbody th {
    width: 29px;
    border-right-color: #999;
    border-bottom-color: #c6c6c6;
}

th.sel {
    background: #d2d2d2;
    color: #217346;
}

thead th.sel {
    border-bottom: 2px solid #217346;
    line-height: 15px;
}

tbody th.sel {
    border-right: 2px solid #217346;
}

td {
    height: 19px;
    padding: 2px 2px 0 2px;
    background: #fff;
    border-right: 1px solid #d4d4d4;
    border-bottom: 1px solid #d4d4d4;
    white-space: nowrap;
}

td.num {
    text-align: right;
}

td.cursor {
    position: relative;
}

td.cursor::before {
    content: '';
    position: absolute;
    inset: -2px;
    border: 2px solid #217346;
}

td.cursor::after {
    content: '';
    position: absolute;
    right: -5px;
    bottom: -5px;
    width: 7px;
    height: 7px;
    background: #217346;
    border: 1px solid #fff;
}

/* 滚动条 */
.vscroll {
    display: flex;
    flex-direction: column;
    width: 21px;
    padding: 2px 3px 0 3px;
}

.vscroll button, .hscroll button {
    width: 15px;
    height: 15px;
    background: #fff;
    border: 1px solid #ababab;
}

.vscroll .track, .hscroll .track {
    flex: 1;
    background: #dadada;
}

.thumb {
    background: #fff;
    border: 1px solid #ababab;
}

.vscroll .thumb {
    height: 96%;
}

.up::after, .down::after, .hscroll button::after, .nav i {
    content: '';
    border: 4px solid transparent;
}

.up::after { border-bottom-color: #666; border-top-width: 0; }
.down::after { border-top-color: #666; border-bottom-width: 0; }
.hscroll .left::after { border-right-color: #666; border-left-width: 0; }
.hscroll .right::after { border-left-color: #666; border-right-width: 0; }

.sheetbar {
    display: flex;
    align-items: center;
    height: 29px;
    flex-shrink: 0;
    border-top: 1px solid #999;
    border-bottom: 1px solid #c6c6c6;
}

.nav {
    display: flex;
    gap: 24px;
    width: 100px;
    padding-left: 27px;
}

.nav .left { border-right-color: #bbb; border-left-width: 0; }
.nav .right { border-left-color: #bbb; border-right-width: 0; }

.sheet-tab {
    align-self: flex-start;
    width: 69px;
    height: 25px;
    margin-top: -1px;
    background: #fff;
    border: 1px solid #ababab;
    border-top-color: #fff;
    border-bottom: 2px solid #217346;
    color: #217346;
    font-size: 13px;
}

.add {
    margin-left: 33px;
}

.sheetbar .dots {
    margin-left: auto;
    margin-right: 15px;
}

.hscroll {
    display: flex;
    width: 511px;
    margin-right: 19px;
}

.hscroll .track {
    margin-right: 2px;
}

.hscroll .thumb {
    width: 94%;
    height: 15px;
}

/* 状态栏 */
.status {
    display: flex;
    align-items: center;
    height: 21px;
    flex-shrink: 0;
    background: #f3f3f3;
    padding-right: 9px;
}

.macro {
    margin: 0 auto 0 8px;
}

.view {
    width: 38px;
    height: 21px;
}

.zoom {
    width: 15px;
}

.status input {
    appearance: none;
    width: 100px;
    height: 12px;
    background: linear-gradient(#aaa, #aaa) center / 100% 1px no-repeat;
}

.status input::-webkit-slider-thumb {
    appearance: none;
    width: 5px;
    height: 12px;
    background: #666;
}

.percent {
    margin-left: 7px;
}

/* 任务栏 */
.taskbar {
    display: flex;
    height: 40px;
    flex-shrink: 0;
    background: linear-gradient(90deg, #1d1f20, #252525 40%, #303030);
    color: #fff;
}

.taskbar > button {
    width: 49px;
    border-bottom: 2px solid transparent;
}

.taskbar > .start {
    width: 50px;
    padding-right: 2px;
}

.taskbar > .run {
    background: linear-gradient(#b0b0b0, #b0b0b0) center bottom / 40px 2px no-repeat border-box;
}

.taskbar > .more {
    background: linear-gradient(90deg, #b0b0b0 31px, #555 31px 32px, #808080 32px) center bottom / 40px 2px no-repeat border-box;
}

.taskbar > .current {
    background: #4d4d4d;
    border-bottom-color: #b0b0b0;
}

.logo {
    font-size: 8px;
    font-weight: bold;
    fill: #fff;
}

.logo.x {
    font-size: 11px;
}

.tray {
    display: flex;
    align-items: center;
    margin-left: auto;
}

.tray button {
    width: 24px;
    height: 40px;
}

.tray .people {
    width: 48px;
}

.tray .ime, .tray .mode {
    width: 28px;
}

.mode span {
    width: 14px;
    height: 14px;
    background: #fff;
    color: #111;
    font-weight: bold;
    line-height: 14px;
}

.tray .badge {
    width: 44px;
}

.badge span {
    width: 22px;
    height: 22px;
    line-height: 18px;
    border: 2px solid #0fd46c;
    border-radius: 50%;
    background: linear-gradient(transparent 70%, #0fd46c 70%);
}

.clock {
    display: flex;
    flex-direction: column;
    align-items: center;
    width: 66px;
    line-height: 19px;
}

.tray .notice {
    width: 46px;
}

.desktop {
    width: 5px;
    height: 40px;
    margin-left: 5px;
    border-left: 1px solid #777;
}
```
